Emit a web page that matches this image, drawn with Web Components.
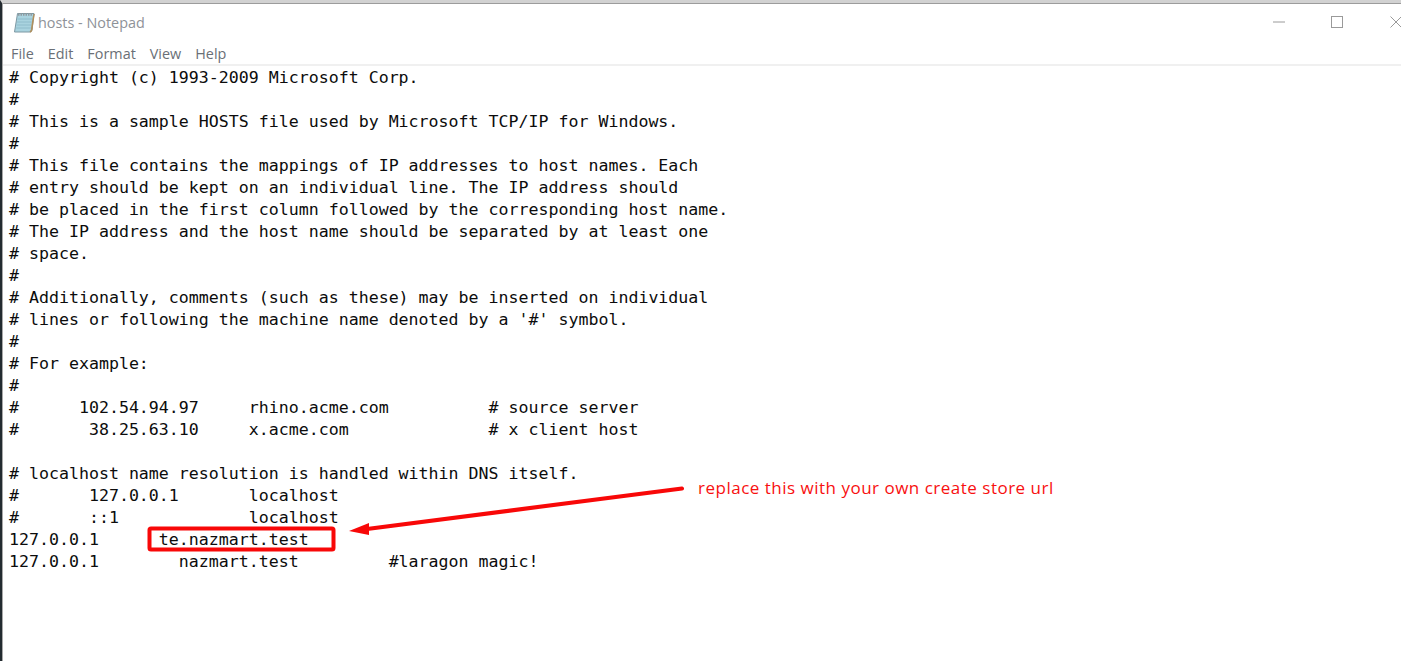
<!DOCTYPE html>
<html>
<head>
<meta charset="utf-8">
<title>hosts - Notepad</title>
<style>
  html, body { margin: 0; height: 100%; background: #fff; overflow: hidden; }
</style>
</head>
<body>
<notepad-window>
  <title-bar slot="title" label="hosts - Notepad"></title-bar>
  <menu-bar slot="menu" items="File,Edit,Format,View,Help"></menu-bar>
  <text-pane></text-pane>
  <store-callout slot="overlay"></store-callout>
</notepad-window>

<script>
const HOSTS = `# Copyright (c) 1993-2009 Microsoft Corp.
#
# This is a sample HOSTS file used by Microsoft TCP/IP for Windows.
#
# This file contains the mappings of IP addresses to host names. Each
# entry should be kept on an individual line. The IP address should
# be placed in the first column followed by the corresponding host name.
# The IP address and the host name should be separated by at least one
# space.
#
# Additionally, comments (such as these) may be inserted on individual
# lines or following the machine name denoted by a '#' symbol.
#
# For example:
#
#      102.54.94.97     rhino.acme.com          # source server
#       38.25.63.10     x.acme.com              # x client host

# localhost name resolution is handled within DNS itself.
#       127.0.0.1       localhost
#       ::1             localhost
127.0.0.1      te.nazmart.test
127.0.0.1        nazmart.test         #laragon magic!`;

class NotepadWindow extends HTMLElement {
  connectedCallback() {
    this.attachShadow({ mode: "open" });
    this.shadowRoot.innerHTML = `
      <style>
        :host {
          display: block;
          position: relative;
          box-sizing: border-box;
          width: 100%;
          height: 661px;
          background: #fff;
          border-top: 3px solid #d2d2d2;
          border-left: 2px solid #232b30;
          overflow: hidden;
        }
        .frame {
          display: flex;
          flex-direction: column;
          height: 100%;
          border-left: 1px solid #a8a8a8;
          box-shadow: inset 0 1px 0 #9c9c9c;
        }
      </style>
      <div class="frame">
        <slot name="title"></slot>
        <slot name="menu"></slot>
        <slot></slot>
      </div>
      <slot name="overlay"></slot>
    `;
  }
}

class TitleBar extends HTMLElement {
  connectedCallback() {
    this.attachShadow({ mode: "open" });
    this.shadowRoot.innerHTML = `
      <style>
        :host {
          display: flex;
          align-items: center;
          height: 38px;
          padding-left: 10px;
          font: 14.4px "Open Sans", "Noto Sans", sans-serif;
          color: #8e9298;
        }
        svg { display: block; flex: none; }
        .label { margin-left: 1px; flex: 1; white-space: pre; }
        .controls { display: flex; align-items: center; height: 100%; }
      </style>
      <svg width="24" height="24" viewBox="0 0 24 24">
        <path d="M4.5 3.5 H21 L19 20 Q18.6 22 17 22 H1.5 Z" fill="#a9d3df" stroke="#7d98a3" stroke-width="1"/>
        <path d="M4.5 9H19M4 12H18.6M3.6 15H18.2M3.2 18H17.8" stroke="#8fbccb" stroke-width="1"/>
        <path d="M17 22 Q19 21 19 17 L21 4" fill="none" stroke="#b08f5c" stroke-width="1.6"/>
        <path d="M5 4.5H20.5" stroke="#8f9aa0" stroke-width="2.4" stroke-dasharray="1.5 1"/>
      </svg>
      <span class="label">${this.getAttribute("label")}</span>
      <div class="controls">
        <svg width="12" height="2" viewBox="0 0 12 2"><path d="M0 1H12" stroke="#9a9a9a" stroke-width="1"/></svg>
        <svg width="12" height="12" viewBox="0 0 12 12" style="margin-left:46px"><rect x=".5" y=".5" width="11" height="11" fill="none" stroke="#9a9a9a"/></svg>
        <svg width="12" height="12" viewBox="0 0 12 12" style="margin-left:47px;margin-right:-1px"><path d="M.5 .5L11.5 11.5M11.5 .5L.5 11.5" stroke="#9a9a9a"/></svg>
      </div>
    `;
  }
}

class MenuBar extends HTMLElement {
  connectedCallback() {
    this.attachShadow({ mode: "open" });
    const items = this.getAttribute("items").split(",");
    this.shadowRoot.innerHTML = `
      <style>
        :host {
          display: flex;
          align-items: center;
          box-sizing: border-box;
          height: 25px;
          padding: 1px 0 0 8px;
          gap: 14px;
          font: 14.4px "Open Sans", "Noto Sans", sans-serif;
          color: #6a6f76;
          border-bottom: 2px solid #f0f0f0;
        }
      </style>
      ${items.map((item) => `<span>${item}</span>`).join("")}
    `;
  }
}

class TextPane extends HTMLElement {
  connectedCallback() {
    this.attachShadow({ mode: "open" });
    this.shadowRoot.innerHTML = `
      <style>
        :host { display: block; flex: 1; padding: 1px 0 0 6px; }
        .text {
          margin: 0;
          font: 16.6px/22px "DejaVu Sans Mono", "Liberation Mono", monospace;
          color: #0c0c0c;
          white-space: pre;
        }
      </style>
      <pre class="text"></pre>
    `;
    this.shadowRoot.querySelector(".text").textContent = HOSTS;
  }
}

// red box, arrow and note drawn over the text
class StoreCallout extends HTMLElement {
  connectedCallback() {
    this.attachShadow({ mode: "open" });
    this.shadowRoot.innerHTML = `
      <style>
        :host { display: block; position: absolute; left: -3px; top: -3px; width: 1401px; height: 661px; pointer-events: none; }
        svg { position: absolute; left: 0; top: 0; }
        .note {
          position: absolute;
          left: 699px;
          top: 477px;
          font: 17px/22px "Open Sans", "Noto Sans", sans-serif;
          letter-spacing: .5px;
          color: #f81010;
          white-space: pre;
        }
      </style>
      <svg width="1401" height="661" viewBox="0 0 1401 661">
        <rect x="150.5" y="528.5" width="184" height="21" fill="none" stroke="#f80808" stroke-width="4" rx="1.5"/>
        <path d="M683 488.5 L368 529" stroke="#f80808" stroke-width="4" stroke-linecap="round"/>
        <path d="M350 531 L370 523 L370 535 Z" fill="#f80808"/>
      </svg>
      <span class="note">replace this with your own create store url</span>
    `;
  }
}

customElements.define("notepad-window", NotepadWindow);
customElements.define("title-bar", TitleBar);
customElements.define("menu-bar", MenuBar);
customElements.define("text-pane", TextPane);
customElements.define("store-callout", StoreCallout);
</script>
</body>
</html>
